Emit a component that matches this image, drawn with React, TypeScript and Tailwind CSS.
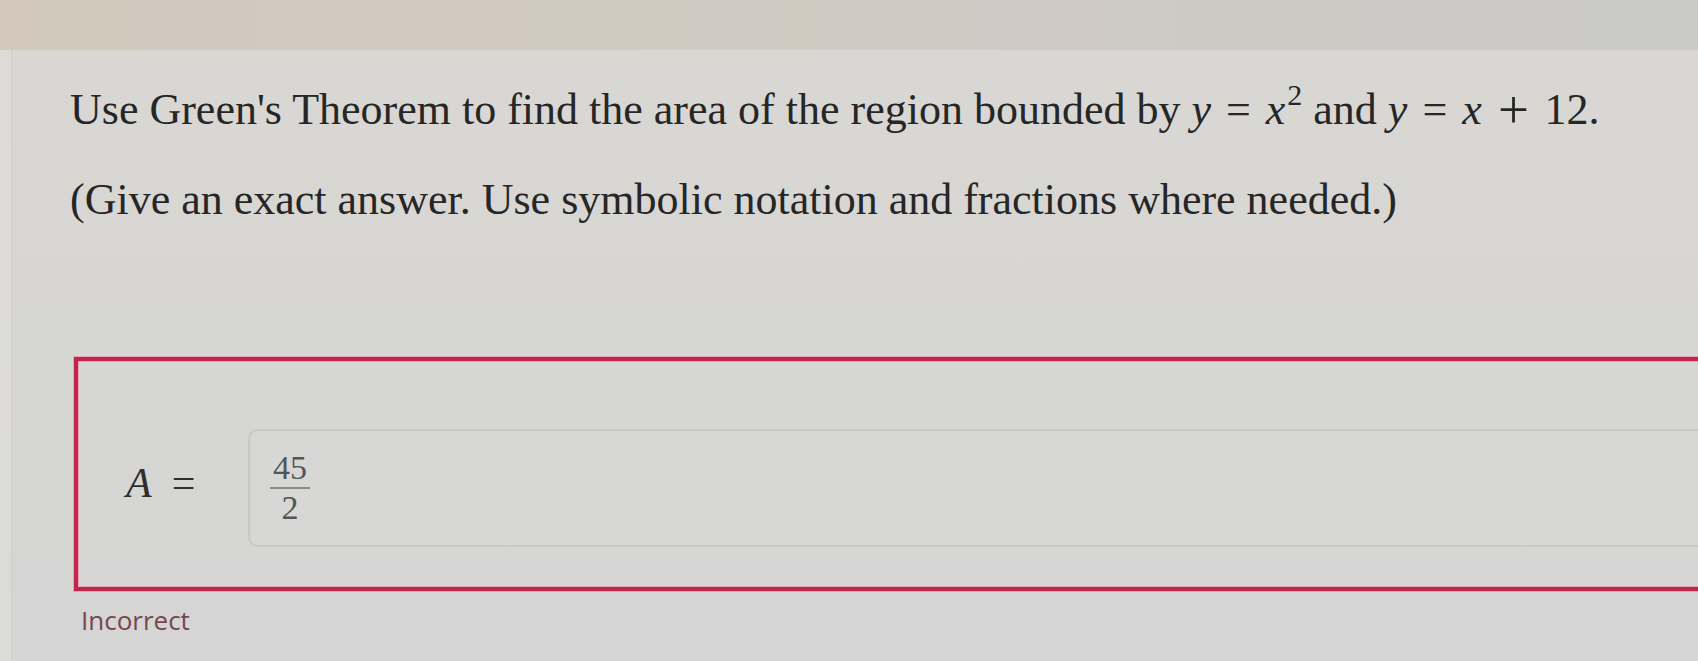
export default function App() {
  const serif = { fontFamily: '"Liberation Serif", "Times New Roman", serif' };

  return (
    <div className="w-full h-[661px] overflow-hidden bg-[#d5d5d3] flex flex-col">
      {/* monitor top band */}
      <div className="h-[50px] shrink-0 bg-gradient-to-r from-[#d2c9bc] via-[#d0cac2] to-[#c9c9c8]" />

      <div className="flex-1 flex">
        {/* left page edge */}
        <div className="w-[12px] shrink-0 bg-[#dcdbd8] border-r border-[#cfcecb]" />

        <div className="flex-1 flex flex-col bg-gradient-to-b from-[#d9d7d3] to-[#d4d5d4]">
          {/* Question */}
          <div className="pl-[58px] pt-[38px] text-[#262626]" style={serif}>
            <p className="text-[44px] leading-[44px]">
              Use Green's Theorem to find the area of the region bounded by{" "}
              <i>y</i> <span className="mx-[4px]">=</span> <i>x</i>
              <span className="inline-block text-[30px] leading-none -translate-y-[19px] ml-[2px]">2</span> and{" "}
              <i>y</i> <span className="mx-[4px]">=</span> <i>x</i>{" "}
              <span className="inline-block mx-[8px] scale-[1.25]">+</span> 12.
            </p>
            <p className="text-[44px] leading-[44px] mt-[46px]">
              (Give an exact answer. Use symbolic notation and fractions where needed.)
            </p>
          </div>

          {/* Answer box */}
          <div className="mt-[135px] ml-[62px] -mr-[20px] h-[234px] border-[4px] border-[#c0264b] shadow-[0_0_0_1px_#eaa5b3,inset_0_0_0_1px_#eaa5b3] flex items-start pt-[68px]">
            <div className="w-[170px] shrink-0 pl-[48px] pt-[33px] flex items-center gap-[20px] text-[42px] leading-none text-[#2e2e2e]" style={serif}>
              <i>A</i>
              <span>=</span>
            </div>
            <div className="flex-1 h-[118px] -mr-[10px] rounded-[10px] border-2 border-[#c8c8c7] bg-[#d7d7d6] flex items-center pl-[20px]">
              <div className="flex flex-col items-center text-[34px] leading-[36px] text-[#555]" style={serif}>
                <span className="px-[3px]">45</span>
                <span className="w-full h-[2px] bg-[#8a8a8a] my-[1px]" />
                <span>2</span>
              </div>
            </div>
          </div>

          {/* Feedback */}
          <p
            className="ml-[69px] mt-[10px] text-[26px] text-[#754650]"
            style={{ fontFamily: '"Open Sans", "Noto Sans", sans-serif' }}
          >
            Incorrect
          </p>
        </div>
      </div>
    </div>
  );
}
